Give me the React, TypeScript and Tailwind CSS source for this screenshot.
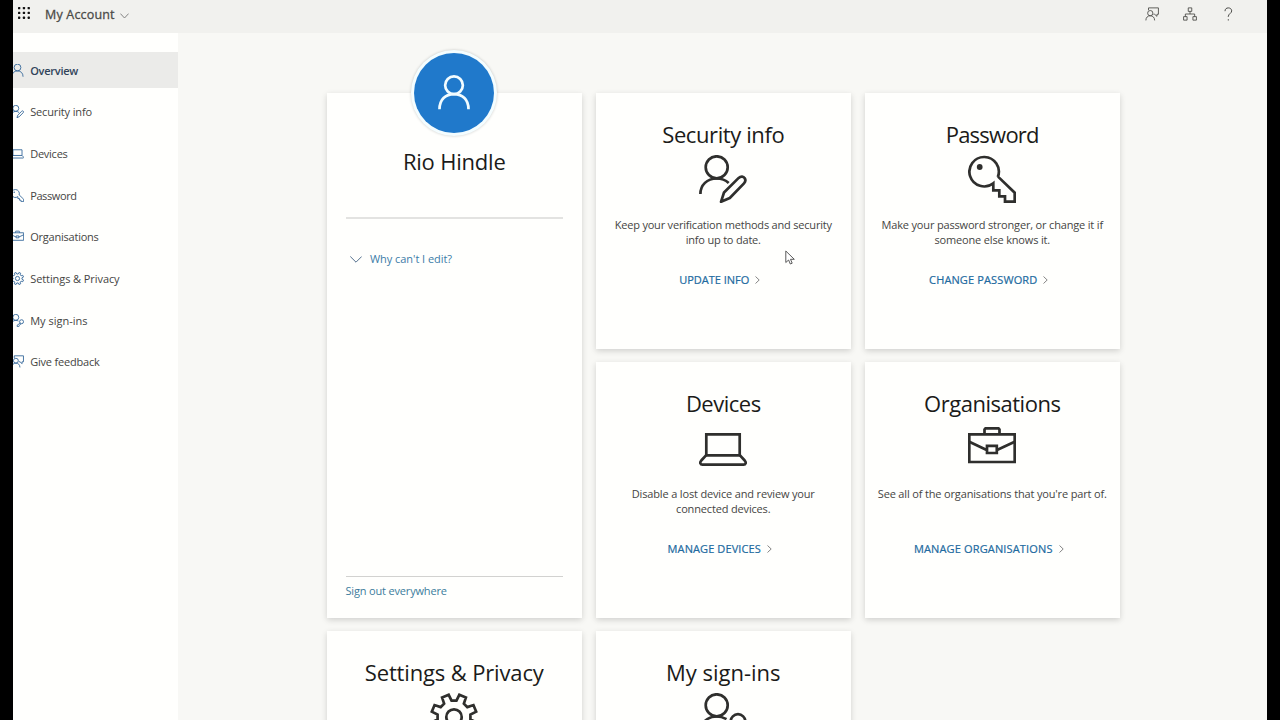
import type { ReactNode } from "react";

type IconProps = { className?: string; stroke?: number };

function Svg({ className = "", stroke = 2.7, children }: IconProps & { children: ReactNode }) {
  return (
    <svg viewBox="0 0 48 48" fill="none" stroke="currentColor" strokeWidth={stroke} className={className}>
      {children}
    </svg>
  );
}

const PersonIcon = (p: IconProps) => (
  <Svg {...p}>
    <circle cx="24" cy="13" r="12.5" />
    <path d="M3.500 47C3.500 33 12 25.500 24 25.500S44.500 33 44.500 47" />
  </Svg>
);

const EditPersonIcon = (p: IconProps) => (
  <Svg {...p}>
    <circle cx="17.700" cy="12.300" r="11" />
    <path d="M1.400 39C1.400 30 8 23.500 17.700 23.500c4.600 0 8.800 1.500 12 4.500" />
    <path d="M22 46.800l3-9.300L39.700 22.900c2.200-2 4.900-1.500 5.900.2 1.200 1.700.9 3.600-.6 5.200L30.800 43z" strokeLinejoin="round" />
  </Svg>
);

const KeyIcon = (p: IconProps) => (
  <Svg {...p}>
    <path d="M29.800 22.100A14.700 14.700 0 1 0 25.300 28.200V35.300H31.300V41.300H37V46.700H46.700V37.700L30 21.600" />
    <circle cx="11.700" cy="12" r="2.900" fill="currentColor" stroke="none" />
  </Svg>
);

const LaptopIcon = (p: IconProps) => (
  <Svg {...p}>
    <path d="M7.300 31.300V10.300H40.700V31.300z" />
    <path d="M7 31.300L2.300 36.500C.5 38.700 1.300 40.700 3.500 40.700H44.500C46.700 40.700 47.500 38.700 45.700 36.500L41 31.300" />
  </Svg>
);

const BriefcaseIcon = (p: IconProps) => (
  <Svg {...p}>
    <path d="M1.300 10.300H46.700V38H1.300zM16.500 10V5.500L17.500 4.300H30.500L31.500 5.500V10" />
    <path d="M1.300 17.700L18.700 26M46.700 17.700L29 26M19 21.800H28.800V29H19z" />
  </Svg>
);

const TEETH = Array.from({ length: 8 }, (_, i) => i * 45 - 67.5);
const polar = (r: number, deg: number) => {
  const a = (deg * Math.PI) / 180;
  return `${(24 + r * Math.cos(a)).toFixed(2)} ${(24 + r * Math.sin(a)).toFixed(2)}`;
};
const GEAR_PATH =
  TEETH.map(
    (t, i) =>
      `${i ? "L" : "M"}${polar(16.6, t - 14)}L${polar(22.8, t - 9)}L${polar(22.8, t + 9)}L${polar(16.6, t + 14)}`
  ).join("") + "Z";

const GearIcon = (p: IconProps) => (
  <Svg {...p}>
    <path d={GEAR_PATH} />
    <circle cx="24" cy="24" r="7.700" />
  </Svg>
);

const SignInsIcon = (p: IconProps) => (
  <Svg {...p}>
    <circle cx="17.700" cy="12.300" r="11" />
    <path d="M1.400 39C1.400 30 8 23.500 17.700 23.500c3.700 0 6.800.9 9.800 2.600" />
    <circle cx="39" cy="28.500" r="7.300" />
    <path d="M34 34L23 41V46.500H29L31 42L37 36" />
  </Svg>
);

const FeedbackIcon = (p: IconProps) => (
  <Svg {...p}>
    <path d="M12 11V3H46V25H41V32L33 25H29" />
    <circle cx="18" cy="21" r="9" />
    <path d="M3 46C3 36 9 30 18 30S33 36 33 46" />
  </Svg>
);

const OrgIcon = (p: IconProps) => (
  <Svg {...p}>
    <path d="M18 3H30V15H18zM2 33H14V45H2zM34 33H46V45H34zM24 15V24M8 33V24H40V33" />
  </Svg>
);

const NAV = [
  { label: "Overview", Icon: PersonIcon, spacing: "tracking-[-0.25px]" },
  { label: "Security info", Icon: EditPersonIcon, spacing: "tracking-[-0.14px]" },
  { label: "Devices", Icon: LaptopIcon, spacing: "tracking-[-0.25px]" },
  { label: "Password", Icon: KeyIcon, spacing: "tracking-[-0.4px]" },
  { label: "Organisations", Icon: BriefcaseIcon, spacing: "tracking-[-0.22px]" },
  { label: "Settings & Privacy", Icon: GearIcon, spacing: "tracking-[-0.08px]" },
  { label: "My sign-ins", Icon: SignInsIcon, spacing: "tracking-[0px]" },
  { label: "Give feedback", Icon: FeedbackIcon, spacing: "tracking-[-0.2px]" },
];

const CARD = "bg-[#fffffd] shadow-[0_2px_6px_rgba(0,0,0,0.16)]";

type TileProps = {
  title: string;
  titleSpacing: string;
  Icon: (p: IconProps) => ReactNode;
  lines?: string[];
  lineSpacing?: string;
  action?: string;
  actionSpacing?: string;
};

function Tile({ title, titleSpacing, Icon, lines = [], lineSpacing = "", action, actionSpacing = "" }: TileProps) {
  return (
    <section className={`flex flex-col items-center ${CARD}`}>
      <h2 className={`mt-[26px] h-[30px] text-[22px] leading-[30px] whitespace-nowrap text-[#1b1b19] ${titleSpacing}`}>{title}</h2>
      <Icon className="mt-[6px] size-12 shrink-0 text-[#2f2f2d]" />
      <div className={`mt-[14px] h-[45px] text-center text-[11px] leading-[15px] text-[#454543] ${lineSpacing}`}>
        {lines.map((l) => (
          <p key={l} className="whitespace-nowrap">{l}</p>
        ))}
      </div>
      {action && (
        <a className={`mt-[10px] flex items-center gap-[6px] text-[11px] leading-[16px] whitespace-nowrap text-[#216a9f] [-webkit-text-stroke:0.2px_#216a9f] ${actionSpacing}`}>
          {action}
          <svg viewBox="0 0 5 8" className="mr-[7px] h-2 w-[5px]" fill="none" stroke="#777" strokeWidth="0.9">
            <path d="M.5.5L4.200 4L.5 7.500" />
          </svg>
        </a>
      )}
    </section>
  );
}

export default function App() {
  return (
    <div className="relative flex h-[720px] w-[1280px] overflow-hidden bg-black px-[13px] font-['Open_Sans','Noto_Sans',sans-serif]">
      <div className="flex w-[1254px] flex-col overflow-hidden bg-[#f8f8f5]">
        <header className="flex h-[33px] shrink-0 items-start bg-[#f1f1ee] text-[#4b4b48]">
          <svg viewBox="0 0 12 12" className="mt-[7px] ml-[5px] size-[12px]" fill="#111">
            {[0, 4.8, 9.6].flatMap((y) =>
              [0, 4.8, 9.6].map((x) => <rect key={`${x}-${y}`} x={x} y={y} width="2.300" height="2.300" rx="0.600" />)
            )}
          </svg>
          <h1 className="ml-[15px] pt-[6px] text-[12.5px] leading-[18px] tracking-[0.18px] whitespace-nowrap [-webkit-text-stroke:0.3px_#4b4b48]">My Account</h1>
          <svg viewBox="0 0 9 6" className="mt-[12.500px] ml-[5px] h-[6px] w-[9px]" fill="none" stroke="#777" strokeWidth="0.900">
            <path d="M.4.6L4.500 5L8.600.6" />
          </svg>
          <div className="mt-[6.500px] mr-[32px] ml-auto flex gap-[24px]">
            <FeedbackIcon className="size-[14px]" stroke={3} />
            <OrgIcon className="size-[14px]" stroke={3} />
            <svg viewBox="0 0 14 14" className="size-[14px]" fill="none" stroke="currentColor" strokeWidth="1">
              <path d="M4 4.200C4 2 5.400.9 7.300.9S10.700 2.100 10.700 3.900C10.700 6.300 7.300 6.800 7.300 9.500V10M7.300 12.200V13.500" />
            </svg>
          </div>
        </header>
        <div className="flex min-h-0 flex-1">
          <nav className="flex w-[165px] shrink-0 flex-col gap-[5.700px] overflow-hidden bg-[#fffffd] pt-[19px]">
            {NAV.map(({ label, Icon, spacing }, i) => (
              <a
                key={label}
                className={`flex h-9 shrink-0 items-center text-[11px] whitespace-nowrap ${spacing} ${
                  i === 0 ? "bg-[#ebebe9] font-semibold text-[#31435a]" : "text-[#454543]"
                }`}
              >
                <Icon className="-ml-[2px] size-[13px] shrink-0 text-[#35679a]" stroke={3.3} />
                <span className="ml-[6.200px] pt-[1.500px]">{label}</span>
              </a>
            ))}
          </nav>
          <main className="grid shrink-0 grid-cols-[255.500px_255.500px_255.500px] grid-rows-[255.500px_255.500px_255.500px] gap-[13.500px] pt-[60px] pl-[148.500px]">
            <section className={`row-span-2 flex flex-col items-center px-[19px] ${CARD}`}>
              <div className="-mt-[43px] flex size-[86px] shrink-0 items-center justify-center rounded-full bg-[#f4fdff] shadow-[0_0_3px_rgba(0,0,0,0.2)]">
                <div className="flex size-[80px] items-center justify-center rounded-full bg-[#2079cb] text-[#f2fcff]">
                  <PersonIcon className="size-[34px] overflow-visible" stroke={3.8} />
                </div>
              </div>
              <h2 className="mt-[10px] text-[22px] leading-[30px] tracking-[-0.2px] whitespace-nowrap text-[#1b1b19]">Rio Hindle</h2>
              <hr className="mt-[41px] w-full border-0 border-t-2 border-[#e3e3e1]" />
              <a className="mt-[32px] flex items-center gap-[8.500px] self-start pl-[4px] text-[11px] leading-[16px] tracking-[-0.05px] text-[#3c7ca8]">
                <svg viewBox="0 0 12 7" className="h-[7px] w-[12px]" fill="none" stroke="#3f5f80" strokeWidth="0.900">
                  <path d="M.3.500L6 6.200L11.700.500" />
                </svg>
                Why can't I edit?
              </a>
              <hr className="mt-auto w-full border-0 border-t border-[#d2d2d0]" />
              <a className="mt-[6px] mb-[19px] self-start text-[11px] leading-[16px] tracking-[-0.17px] text-[#3c7c9c]">Sign out everywhere</a>
            </section>
            <Tile
              title="Security info"
              titleSpacing="tracking-[-0.4px]"
              Icon={EditPersonIcon}
              lines={["Keep your verification methods and security", "info up to date."]}
              lineSpacing="tracking-[-0.2px]"
              action="UPDATE INFO"
            />
            <Tile
              title="Password"
              titleSpacing="tracking-[-0.75px]"
              Icon={KeyIcon}
              lines={["Make your password stronger, or change it if", "someone else knows it."]}
              lineSpacing="tracking-[-0.17px]"
              action="CHANGE PASSWORD"
              actionSpacing="tracking-[0.13px]"
            />
            <Tile
              title="Devices"
              titleSpacing="tracking-[-0.5px]"
              Icon={LaptopIcon}
              lines={["Disable a lost device and review your", "connected devices."]}
              lineSpacing="tracking-[-0.16px]"
              action="MANAGE DEVICES"
              actionSpacing="tracking-[0.1px]"
            />
            <Tile
              title="Organisations"
              titleSpacing="tracking-[-0.48px]"
              Icon={BriefcaseIcon}
              lines={["See all of the organisations that you're part of."]}
              lineSpacing="tracking-[-0.155px]"
              action="MANAGE ORGANISATIONS"
              actionSpacing="tracking-[0.15px]"
            />
            <Tile title="Settings & Privacy" titleSpacing="tracking-[-0.15px]" Icon={GearIcon} />
            <Tile title="My sign-ins" titleSpacing="tracking-[0px]" Icon={SignInsIcon} />
          </main>
        </div>
      </div>
      <svg viewBox="0 0 10 15" className="absolute top-[250px] left-[785px] h-[15px] w-[10px]" fill="#fff" stroke="#4a4a4a" strokeWidth="0.900">
        <path d="M.8 1V12.500L3.600 10L5.300 14L7.200 13.200L5.500 9.300H9.300z" />
      </svg>
    </div>
  );
}
